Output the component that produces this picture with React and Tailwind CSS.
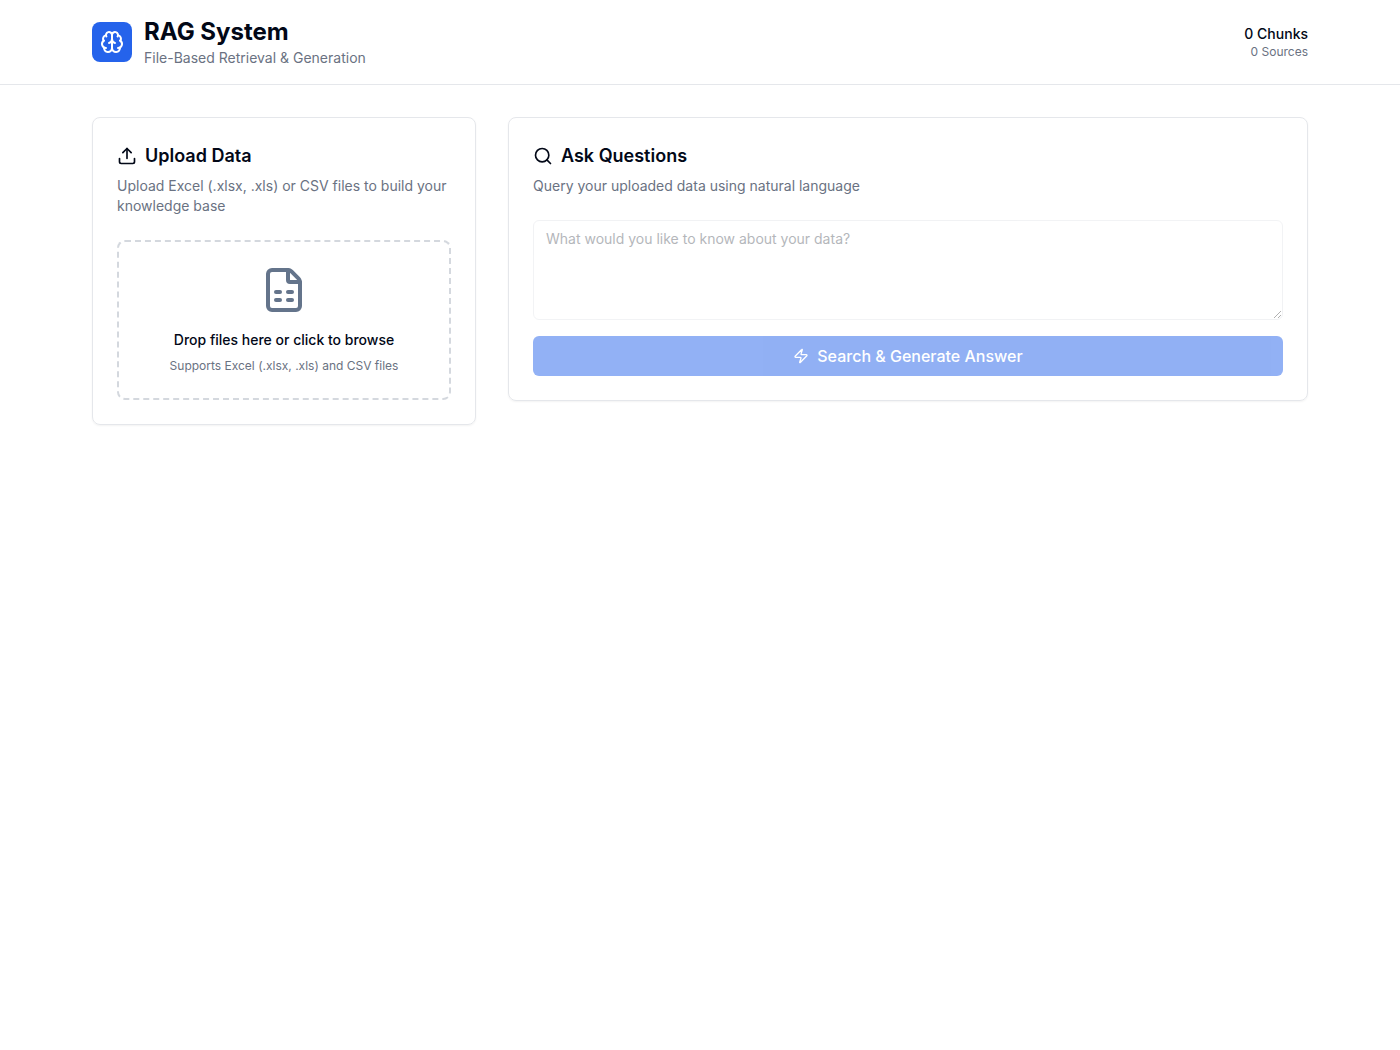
import React from "react";
import { Brain, Upload, FileSpreadsheet, Search, Zap } from "lucide-react";

const App = () => {
  return (
    <div className="min-h-screen bg-white text-[#020817] font-['Inter',sans-serif]">
      <header className="border-b border-[#e5e7eb] bg-white">
        <div className="max-w-7xl mx-auto px-8 py-4 flex items-center justify-between">
          <div className="flex items-center gap-3">
            <div className="w-10 h-10 rounded-lg bg-[#2563eb] flex items-center justify-center">
              <Brain className="w-6 h-6 text-white" />
            </div>
            <div>
              <h1 className="text-2xl font-bold">RAG System</h1>
              <p className="text-sm text-gray-500">
                File-Based Retrieval &amp; Generation
              </p>
            </div>
          </div>
          <div className="text-right">
            <p className="text-sm font-medium">0 Chunks</p>
            <p className="text-xs text-gray-500">0 Sources</p>
          </div>
        </div>
      </header>

      <main className="max-w-7xl mx-auto px-8 py-8">
        <div className="grid grid-cols-3 gap-8 items-start">
          {/* Upload card */}
          <section className="rounded-lg border border-[#e5e7eb] shadow-xs p-6">
            <h2 className="flex items-center gap-2 text-lg font-semibold">
              <Upload className="w-5 h-5" />
              Upload Data
            </h2>
            <p className="mt-1.5 text-sm text-gray-500">
              Upload Excel (.xlsx, .xls) or CSV files to build your knowledge
              base
            </p>
            <div className="mt-6 rounded-lg border-2 border-dashed border-[#d4d8de] p-6 text-center cursor-pointer">
              <FileSpreadsheet className="w-12 h-12 mx-auto mb-4 text-[#64748b]" />
              <p className="text-sm font-medium">
                Drop files here or click to browse
              </p>
              <p className="mt-2 text-xs text-gray-500">
                Supports Excel (.xlsx, .xls) and CSV files
              </p>
            </div>
          </section>

          {/* Query card */}
          <section className="col-span-2 rounded-lg border border-[#e5e7eb] shadow-xs p-6">
            <h2 className="flex items-center gap-2 text-lg font-semibold">
              <Search className="w-5 h-5" />
              Ask Questions
            </h2>
            <p className="mt-1.5 text-sm text-gray-500">
              Query your uploaded data using natural language
            </p>
            <div className="mt-6 flex flex-col gap-4">
              <textarea
                disabled
                placeholder="What would you like to know about your data?"
                className="block w-full h-[100px] rounded-md border border-[#e5e7eb] px-3 py-2 text-sm placeholder:text-[#6b7078] opacity-50 outline-none"
              />
              <button
                type="button"
                disabled
                className="h-10 w-full rounded-md bg-[#2563eb] opacity-50 text-white font-medium flex items-center justify-center gap-2"
              >
                <Zap className="w-4 h-4" />
                Search &amp; Generate Answer
              </button>
            </div>
          </section>
        </div>
      </main>
    </div>
  );
};

export default App;
